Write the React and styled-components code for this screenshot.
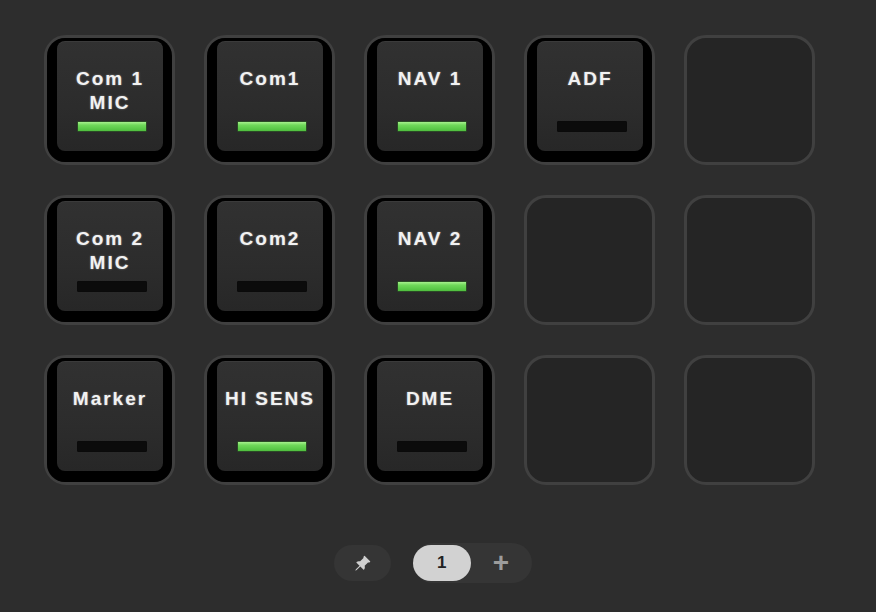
import React from 'react';
import styled, { createGlobalStyle } from 'styled-components';
import { BsPinAngleFill } from 'react-icons/bs';

const GlobalStyle = createGlobalStyle`
    html, body {
        margin: 0;
        padding: 0;
        background: #2d2d2d;
        font-family: "Liberation Sans", Arial, sans-serif;
    }
`;

const Page = styled.div`
    width: 876px;
    height: 612px;
    box-sizing: border-box;
    padding: 35px 0 0 44px;
    display: flex;
    flex-direction: column;
`;

const Grid = styled.div`
    display: grid;
    grid-template-columns: repeat(5, 131px);
    grid-auto-rows: 130px;
    column-gap: 29px;
    row-gap: 30px;
`;

const Slot = styled.div`
    box-sizing: border-box;
    border: 3px solid #404040;
    border-radius: 22px;
    background: #252525;
    display: flex;
`;

const KeyWell = styled.div`
    flex: 1;
    display: flex;
    border-radius: 18px;
    background: #000;
    padding: 3px 9px 11px 10px;
`;

const KeyFace = styled.div`
    flex: 1;
    border-radius: 8px;
    background: linear-gradient(180deg, #313131 0%, #2c2c2c 60%, #272727 100%);
    box-shadow: inset 0 1px 0 rgba(255, 255, 255, 0.05);
    display: flex;
    flex-direction: column;
    align-items: center;
    padding-top: 26px;
    box-sizing: border-box;
`;

const Label = styled.div`
    color: #f2f2f2;
    font-weight: bold;
    font-size: 19px;
    line-height: 24px;
    letter-spacing: 2px;
    text-align: center;
    text-shadow: 0 0 2px rgba(255, 255, 255, 0.45);
    height: 48px;
    white-space: pre-line;
`;

const Lamp = styled.div`
    margin-top: 6px;
    margin-left: 3px;
    width: 68px;
    height: 9px;
    border-radius: 1px;
    border: 1px solid ${props => (props.$on ? '#2b4a26' : '#0a0a0a')};
    background: ${props =>
        props.$on
            ? 'linear-gradient(180deg, #a6f08e 0%, #6fd85a 35%, #4fbf3e 100%)'
            : '#0b0b0b'};
`;

const Pager = styled.div`
    display: flex;
    justify-content: center;
    align-items: center;
    gap: 22px;
    margin-top: 58px;
    margin-left: -54px;
`;

const PinButton = styled.div`
    width: 57px;
    height: 36px;
    border-radius: 18px;
    background: #353535;
    display: flex;
    align-items: center;
    justify-content: center;
    color: #cfcfcf;
`;

const PageGroup = styled.div`
    height: 40px;
    border-radius: 20px;
    background: #353535;
    display: flex;
    align-items: center;
    padding: 0 23px 0 0;
    gap: 22px;
`;

const PageNum = styled.div`
    width: 58px;
    height: 36px;
    border-radius: 18px;
    background: #d2d2d2;
    color: #222;
    font-weight: bold;
    font-size: 17px;
    display: flex;
    align-items: center;
    justify-content: center;
`;

const AddPage = styled.div`
    color: #9c9c9c;
    font-size: 28px;
    font-weight: bold;
    line-height: 1;
    display: flex;
    align-items: center;
`;

const keys = [
    { label: 'Com 1\nMIC', on: true },
    { label: 'Com1', on: true },
    { label: 'NAV 1', on: true },
    { label: 'ADF', on: false },
    null,
    { label: 'Com 2\nMIC', on: false },
    { label: 'Com2', on: false },
    { label: 'NAV 2', on: true },
    null,
    null,
    { label: 'Marker', on: false },
    { label: 'HI SENS', on: true },
    { label: 'DME', on: false },
    null,
    null,
];

function Key({ label, on }) {
    return (
        <Slot>
            <KeyWell>
                <KeyFace>
                    <Label>{label}</Label>
                    <Lamp $on={on} />
                </KeyFace>
            </KeyWell>
        </Slot>
    );
}

export default function App() {
    return (
        <>
            <GlobalStyle />
            <Page>
                <Grid>
                    {keys.map((k, i) => (k ? <Key key={i} {...k} /> : <Slot key={i} />))}
                </Grid>
                <Pager>
                    <PinButton>
                        <BsPinAngleFill size={17} />
                    </PinButton>
                    <PageGroup>
                        <PageNum>1</PageNum>
                        <AddPage>+</AddPage>
                    </PageGroup>
                </Pager>
            </Page>
        </>
    );
}
